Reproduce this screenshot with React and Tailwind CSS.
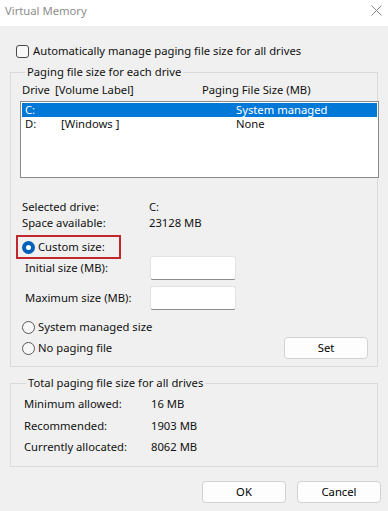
import { useState } from 'react';

// Windows "Virtual Memory" dialog

function Radio({ checked }) {
  return checked ? (
    <span className="flex h-[13px] w-[13px] shrink-0 items-center justify-center rounded-full bg-[#005fb8]">
      <span className="h-[5px] w-[5px] rounded-full bg-white" />
    </span>
  ) : (
    <span className="h-[13px] w-[13px] shrink-0 rounded-full border border-[#5a5a5a] bg-[#f7f7f7]" />
  );
}

function WinButton({ children }) {
  return (
    <button className="flex h-[22px] w-[84px] items-center justify-center rounded-[4px] border border-[#d3d3d3] bg-[#fdfdfd] text-black">
      {children}
    </button>
  );
}

function SizeInput() {
  return (
    <div className="h-[24px] w-[86px] rounded-[3px] border border-[#e3e3e3] border-b-[#8c8c8c] bg-white" />
  );
}

const drives = [
  { drive: 'C:', label: '', size: 'System managed' },
  { drive: 'D:', label: '[Windows ]', size: 'None' },
];

export default function App() {
  const [selected, setSelected] = useState(0);

  return (
    <div className="h-[511px] w-[388px] overflow-hidden bg-[#f0f0f0] font-['Noto_Sans',sans-serif] text-[11.25px] leading-[16px] text-[#111]">
      {/* title bar */}
      <div className="flex h-[26px] items-start justify-between bg-white pl-[5px] pr-[6px] pt-[3px]">
        <span className="text-[#8e8e8e]">Virtual Memory</span>
        <svg className="mt-[2px]" width="11" height="11" viewBox="0 0 11 11">
          <path d="M0.5 0.5 L10.5 10.5 M10.5 0.5 L0.5 10.5" stroke="#8a8a8a" strokeWidth="1" />
        </svg>
      </div>

      <label className="mt-[17px] flex h-[16px] items-center pl-[16px]">
        <span className="h-[13px] w-[13px] rounded-[3px] border border-[#4a4a4a] bg-[#f8f8f8]" />
        <span className="ml-[4px]">Automatically manage paging file size for all drives</span>
      </label>

      <fieldset className="ml-[10px] mt-[5px] w-[368px] min-w-0 border border-[#dadada] pb-[7px] pl-[9px]">
        <legend className="ml-[5px] px-[2px] leading-[16px]">Paging file size for each drive</legend>

        <div className="mt-[2px] flex pl-[2px]">
          <span className="w-[33px]">Drive</span>
          <span className="w-[147px]">[Volume Label]</span>
          <span>Paging File Size (MB)</span>
        </div>

        <div className="mt-[3px] h-[77px] w-[359px] border border-[#8a8a8a] bg-white p-[1px]">
          {drives.map((d, i) => (
            <div
              key={d.drive}
              onClick={() => setSelected(i)}
              className={
                'flex h-[14px] items-center pl-[3px] leading-[14px] ' +
                (selected === i ? 'bg-[#0078d7] text-white' : 'text-[#111]')
              }
            >
              <span className="w-[36px]">{d.drive}</span>
              <span className="w-[175px]">{d.label}</span>
              <span>{d.size}</span>
            </div>
          ))}
        </div>

        <div className="mt-[21px] flex pl-[2px]">
          <span className="w-[127px]">Selected drive:</span>
          <span>C:</span>
        </div>
        <div className="flex pl-[2px]">
          <span className="w-[127px]">Space available:</span>
          <span>23128 MB</span>
        </div>

        <div className="ml-[-4px] mt-[4px] flex h-[24px] w-[105px] items-center border-2 border-[#c1272d] pl-[4px]">
          <Radio checked />
          <span className="ml-[3px]">Custom size:</span>
        </div>

        <div className="mt-[-3px] flex h-[24px] items-center pl-[5px]">
          <span className="w-[125px]">Initial size (MB):</span>
          <SizeInput />
        </div>
        <div className="mt-[6px] flex h-[24px] items-center pl-[5px]">
          <span className="w-[125px]">Maximum size (MB):</span>
          <SizeInput />
        </div>

        <div className="mt-[9px] flex h-[16px] items-center pl-[2px]">
          <Radio />
          <span className="ml-[3px]">System managed size</span>
        </div>
        <div className="mt-[2px] flex h-[22px] items-center pl-[2px] pr-[9px]">
          <Radio />
          <span className="ml-[3px]">No paging file</span>
          <span className="ml-auto">
            <WinButton>Set</WinButton>
          </span>
        </div>
      </fieldset>

      <fieldset className="ml-[10px] mt-[8px] w-[368px] min-w-0 border border-[#dadada] pb-[11px] pl-[10px]">
        <legend className="ml-[5px] px-[2px] leading-[16px]">Total paging file size for all drives</legend>
        <div className="mt-[5px] flex flex-col gap-[5.5px] pl-[3px]">
          <div className="flex">
            <span className="w-[127px]">Minimum allowed:</span>
            <span>16 MB</span>
          </div>
          <div className="flex">
            <span className="w-[127px]">Recommended:</span>
            <span>1903 MB</span>
          </div>
          <div className="flex">
            <span className="w-[127px]">Currently allocated:</span>
            <span>8062 MB</span>
          </div>
        </div>
      </fieldset>

      <div className="mt-[14px] flex justify-end gap-[11px] pr-[7px]">
        <WinButton>OK</WinButton>
        <WinButton>Cancel</WinButton>
      </div>
    </div>
  );
}
